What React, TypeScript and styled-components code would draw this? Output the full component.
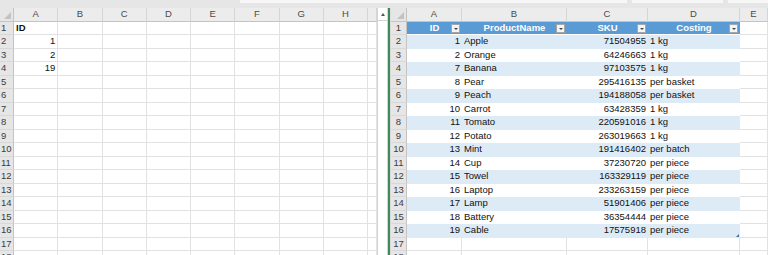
import React from "react";
import styled, { createGlobalStyle, css } from "styled-components";

const GlobalStyle = createGlobalStyle`
  html, body { margin: 0; padding: 0; background: #ffffff; }
  body { font-family: "Liberation Sans", Arial, sans-serif; }
`;

const Window = styled.div`
  width: 768px;
  height: 255px;
  overflow: hidden;
  display: flex;
  flex-direction: column;
  background: #ffffff;
`;

const TopStrip = styled.div`
  height: 8px;
  flex: none;
  background: #e6e6e6;
  display: flex;
  align-items: flex-start;
  gap: 5px;
  padding-left: 240px;
`;

const Chip = styled.div<{ $w: number }>`
  width: ${(p) => p.$w}px;
  height: 3px;
  background: #f7f7f7;
`;

const Body = styled.div`
  flex: 1;
  min-height: 0;
  display: flex;
`;

const Sheet = styled.div<{ $cols: string; $w?: number }>`
  display: grid;
  grid-template-columns: ${(p) => p.$cols};
  grid-auto-rows: 13.5px;
  align-content: start;
  ${(p) => (p.$w ? css`width: ${p.$w}px; flex: none;` : css`flex: 1; min-width: 0;`)}
  overflow: hidden;
`;

const Base = styled.div`
  box-sizing: border-box;
  font-size: 9.5px;
  line-height: 12.5px;
  white-space: nowrap;
  overflow: hidden;
  position: relative;
`;

const ColHead = styled(Base)`
  background: #ececec;
  color: #4a4a4a;
  text-align: center;
  border-right: 1px solid #d6d6d6;
  border-bottom: 1px solid #c4c4c4;
`;

const Corner = styled(Base)`
  background: #e6e6e6;
  border-right: 1px solid #c4c4c4;
  border-bottom: 1px solid #c4c4c4;
  &::after {
    content: "";
    position: absolute;
    right: 2px;
    bottom: 2px;
    width: 0;
    height: 0;
    border-left: 7px solid transparent;
    border-bottom: 7px solid #c2c2c2;
  }
`;

const RowHead = styled(Base)<{ $left?: boolean }>`
  background: #e6e6e6;
  color: #3c3c3c;
  text-align: ${(p) => (p.$left ? "left" : "center")};
  padding-left: ${(p) => (p.$left ? "1px" : "0")};
  border-right: 1px solid #c4c4c4;
  border-bottom: 1px solid #d8d8d8;
`;

const Cell = styled(Base)<{ $align?: "left" | "right"; $bold?: boolean }>`
  background: #ffffff;
  color: #111;
  padding: 0 2px;
  text-align: ${(p) => p.$align ?? "left"};
  font-weight: ${(p) => (p.$bold ? "bold" : "normal")};
  border-right: 1px solid #e2e2e2;
  border-bottom: 1px solid #e2e2e2;
`;

const TableCell = styled(Base)<{ $align?: "left" | "right"; $band: boolean }>`
  background: ${(p) => (p.$band ? "#ddebf7" : "#ffffff")};
  color: #111;
  padding: 0 2px;
  text-align: ${(p) => p.$align ?? "left"};
`;

const TableHead = styled(Base)`
  background: #5b9bd5;
  color: #ffffff;
  font-weight: bold;
  text-align: center;
  border-bottom: 1px solid #ffffff;
`;

const DropButton = styled.span`
  position: absolute;
  right: 2px;
  top: 2px;
  width: 9px;
  height: 9px;
  box-sizing: border-box;
  background: #f4f4f4;
  border: 1px solid #a6a6a6;
  &::after {
    content: "";
    position: absolute;
    left: 2px;
    top: 3px;
    border-left: 2px solid transparent;
    border-right: 2px solid transparent;
    border-top: 2px solid #444;
  }
`;

const ResizeMark = styled.span`
  position: absolute;
  right: 1px;
  bottom: 1px;
  border-left: 3px solid transparent;
  border-bottom: 3px solid #3c6fb0;
`;

const Scrollbar = styled.div`
  width: 11px;
  flex: none;
  box-sizing: border-box;
  border-left: 1px solid #d4d4d4;
  border-right: 1px solid #d4d4d4;
  background: #ffffff;
  display: flex;
  flex-direction: column;
`;

const ScrollCap = styled.div`
  height: 13px;
  box-sizing: border-box;
  border-bottom: 1px solid #dedede;
  background: #ececec;
`;

const ScrollButton = styled.div`
  height: 13px;
  box-sizing: border-box;
  border-bottom: 1px solid #d4d4d4;
  display: flex;
  align-items: center;
  justify-content: center;
  &::after {
    content: "";
    border-left: 2.5px solid transparent;
    border-right: 2.5px solid transparent;
    border-bottom: 3px solid #555;
  }
`;

const Splitter = styled.div`
  width: 2px;
  flex: none;
  background: #3e8a5a;
`;

const Gap = styled.div`
  width: 1px;
  flex: none;
  background: #dcdcdc;
`;

const leftCols = ["A", "B", "C", "D", "E", "F", "G", "H", ""];
const rightCols = ["A", "B", "C", "D", "E"];

const products: [number, string, number, string][] = [
  [1, "Apple", 71504955, "1 kg"],
  [2, "Orange", 64246663, "1 kg"],
  [7, "Banana", 97103575, "1 kg"],
  [8, "Pear", 295416135, "per basket"],
  [9, "Peach", 194188058, "per basket"],
  [10, "Carrot", 63428359, "1 kg"],
  [11, "Tomato", 220591016, "1 kg"],
  [12, "Potato", 263019663, "1 kg"],
  [13, "Mint", 191416402, "per batch"],
  [14, "Cup", 37230720, "per piece"],
  [15, "Towel", 163329119, "per piece"],
  [16, "Laptop", 233263159, "per piece"],
  [17, "Lamp", 51901406, "per piece"],
  [18, "Battery", 36354444, "per piece"],
  [19, "Cable", 17575918, "per piece"],
];

const leftValues: Record<number, { text: string; align: "left" | "right"; bold?: boolean }> = {
  1: { text: "ID", align: "left", bold: true },
  2: { text: "1", align: "right" },
  3: { text: "2", align: "right" },
  4: { text: "19", align: "right" },
};

const ROWS = 18;

function LeftSheet() {
  const rows = [];
  for (let r = 1; r <= ROWS; r++) {
    rows.push(<RowHead key={`h${r}`} $left>{r}</RowHead>);
    leftCols.forEach((_, c) => {
      const v = c === 0 ? leftValues[r] : undefined;
      rows.push(
        <Cell key={`${r}-${c}`} $align={v?.align} $bold={v?.bold}>
          {v?.text ?? ""}
        </Cell>
      );
    });
  }
  return (
    <Sheet $w={377} $cols="14px repeat(8, 44.25px) 9px">
      <Corner />
      {leftCols.map((c, i) => (
        <ColHead key={`c${i}`}>{c}</ColHead>
      ))}
      {rows}
    </Sheet>
  );
}

function RightSheet() {
  const headers = ["ID", "ProductName", "SKU", "Costing"];
  const cells = [];
  for (let r = 1; r <= ROWS; r++) {
    cells.push(<RowHead key={`h${r}`}>{r}</RowHead>);
    if (r === 1) {
      headers.forEach((h) =>
        cells.push(
          <TableHead key={`th${h}`}>
            {h}
            <DropButton />
          </TableHead>
        )
      );
      cells.push(<Cell key="e1" />);
    } else if (r - 2 < products.length) {
      const [id, name, sku, cost] = products[r - 2];
      const band = r % 2 === 0;
      const last = r - 2 === products.length - 1;
      cells.push(
        <TableCell key={`a${r}`} $band={band} $align="right">{id}</TableCell>,
        <TableCell key={`b${r}`} $band={band}>{name}</TableCell>,
        <TableCell key={`c${r}`} $band={band} $align="right">{sku}</TableCell>,
        <TableCell key={`d${r}`} $band={band}>
          {cost}
          {last && <ResizeMark />}
        </TableCell>,
        <Cell key={`e${r}`} />
      );
    } else {
      rightCols.forEach((c) => cells.push(<Cell key={`${r}${c}`} />));
    }
  }
  return (
    <Sheet $cols="16px 55px 105px 81px 92px 1fr">
      <Corner />
      {rightCols.map((c) => (
        <ColHead key={c}>{c}</ColHead>
      ))}
      {cells}
    </Sheet>
  );
}

export default function App() {
  return (
    <>
      <GlobalStyle />
      <Window>
        <TopStrip>
          <Chip $w={390} />
          <Chip $w={92} />
          <Chip $w={40} />
        </TopStrip>
        <Body>
          <LeftSheet />
          <Scrollbar>
            <ScrollButton />
          </Scrollbar>
          <Splitter />
          <Gap />
          <RightSheet />
        </Body>
      </Window>
    </>
  );
}
